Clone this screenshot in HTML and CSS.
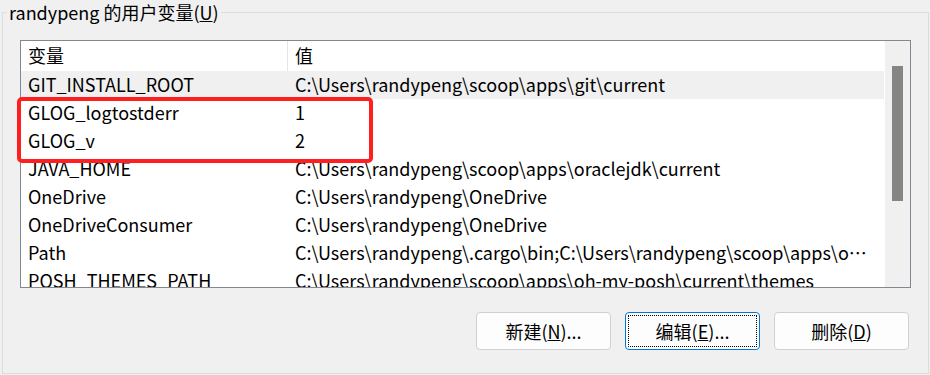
FILE: index.html
```html
<!DOCTYPE html>
<html lang="zh-CN">
  <head>
    <meta charset="UTF-8" />
    <meta name="viewport" content="width=device-width, initial-scale=1.0" />
    <title>用户变量</title>
    <link rel="stylesheet" href="styles.css">
  </head>
  <body>
    <fieldset class="group">
      <legend>randypeng 的用户变量(<u>U</u>)</legend>

      <div class="listbox">
        <div class="list">
          <div class="row head">
            <div class="cell name">变量</div>
            <div class="cell value">值</div>
          </div>
          <div class="row selected">
            <div class="cell name">GIT_INSTALL_ROOT</div>
            <div class="cell value">C:\Users\randypeng\scoop\apps\git\current</div>
          </div>
          <div class="row">
            <div class="cell name">GLOG_logtostderr</div>
            <div class="cell value">1</div>
          </div>
          <div class="row">
            <div class="cell name">GLOG_v</div>
            <div class="cell value">2</div>
          </div>
          <div class="row">
            <div class="cell name">JAVA_HOME</div>
            <div class="cell value">C:\Users\randypeng\scoop\apps\oraclejdk\current</div>
          </div>
          <div class="row">
            <div class="cell name">OneDrive</div>
            <div class="cell value">C:\Users\randypeng\OneDrive</div>
          </div>
          <div class="row">
            <div class="cell name">OneDriveConsumer</div>
            <div class="cell value">C:\Users\randypeng\OneDrive</div>
          </div>
          <div class="row">
            <div class="cell name">Path</div>
            <div class="cell value">C:\Users\randypeng\.cargo\bin;C:\Users\randypeng\scoop\apps\oraclejdk\current\bin</div>
          </div>
          <div class="row">
            <div class="cell name">POSH_THEMES_PATH</div>
            <div class="cell value">C:\Users\randypeng\scoop\apps\oh-my-posh\current\themes</div>
          </div>
        </div>

        <div class="scrollbar">
          <div class="thumb"></div>
        </div>

        <div class="highlight"></div>
      </div>

      <div class="actions">
        <button>新建(<u>N</u>)...</button>
        <button class="focused">编辑(<u>E</u>)...</button>
        <button>删除(<u>D</u>)</button>
      </div>
    </fieldset>
  </body>
</html>
```

FILE: styles.css
```css
body {
  margin: 0;
  background-color: #f0f0f0;
  font-family: "Noto Sans CJK SC", "Noto Sans", sans-serif;
  font-size: 18px;
  color: #000;
}

.group {
  min-width: 0;
  margin: 0 1px 1px 2px;
  padding: 16px 17px 24px 4px;
  border: 1px solid #dcdcdc;
  height: 374px;
  box-sizing: border-box;
}

.group legend {
  padding: 0 2px;
  line-height: 24px;
}

.listbox {
  position: relative;
  display: flex;
  margin-left: 13px;
  height: 248px;
  box-sizing: border-box;
  border: 1px solid #828790;
  background-color: #ffffff;
}

.list {
  flex: 1;
  min-width: 0;
  overflow: hidden;
  margin-right: 1px;
}

.row {
  display: flex;
  height: 28px;
  line-height: 27px;
}

.row.head {
  height: 30px;
  line-height: 29px;
}

.row.selected {
  background-color: #f0f0f0;
}

.cell {
  padding-left: 7px;
  white-space: nowrap;
  overflow: hidden;
  text-overflow: ellipsis;
  box-sizing: border-box;
}

.cell.name {
  width: 267px;
  flex-shrink: 0;
}

.cell.value {
  flex: 1;
  min-width: 0;
  padding-right: 14px;
}

.row.head .cell.name {
  border-right: 1px solid #e5e5e5;
}

.scrollbar {
  width: 25px;
  flex-shrink: 0;
  background-color: #f0f0f0;
  padding: 25px 7px 0;
  box-sizing: border-box;
}

.thumb {
  height: 135px;
  background-color: #858585;
}

.highlight {
  position: absolute;
  left: -4px;
  top: 56px;
  width: 356px;
  height: 66px;
  box-sizing: border-box;
  border: 4px solid #ff1f1f;
  border-radius: 5px;
}

.actions {
  display: flex;
  justify-content: flex-end;
  gap: 14px;
  margin-top: 24px;
  padding-right: 2px;
}

.actions button {
  width: 135px;
  height: 38px;
  background-color: #fdfdfd;
  border: 1px solid #d0d0d0;
  border-radius: 4px;
  font-family: inherit;
  font-size: 18px;
  color: #000;
  padding: 0;
}

.actions button.focused {
  border-color: #0078d4;
  outline: 1px dotted #000;
  outline-offset: -4px;
}
```
